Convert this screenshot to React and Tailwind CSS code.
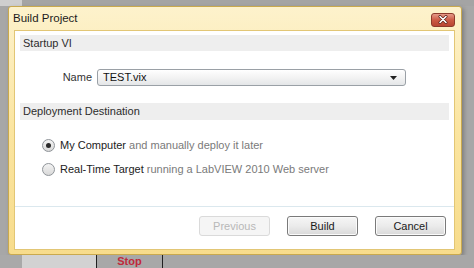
import React from "react";

const font = { fontFamily: '"Liberation Sans", Arial, sans-serif' };

function Radio({ checked }) {
  return (
    <div className="w-[13px] h-[13px] rounded-full border border-[#8f9499] bg-gradient-to-b from-[#f4f4f4] to-[#d8d8d8] flex items-center justify-center shrink-0">
      {checked && <div className="w-[5px] h-[5px] rounded-full bg-[#2a2a2a]" />}
    </div>
  );
}

function Btn({ children, disabled }) {
  return (
    <div
      className={
        "w-[71px] h-[20px] rounded-[3px] flex items-center justify-center text-[11px] " +
        (disabled
          ? "border border-[#dadada] bg-[#f5f5f5] text-[#b8b8b8]"
          : "border border-[#7a7a7a] bg-gradient-to-b from-[#f6f6f6] via-[#ebebeb] to-[#d9d9d9] text-[#1a1a1a] shadow-[inset_0_0_0_1px_#fbfbfb]")
      }
    >
      {children}
    </div>
  );
}

export default function App() {
  return (
    <div className="w-[474px] h-[268px] overflow-hidden bg-[#a7a7a7] flex flex-col" style={font}>
      <div className="h-[6px] flex">
        <div className="w-[22px] bg-[#cfcfcf]" />
        <div className="flex-1 bg-[#a4a4a4]" />
      </div>
      <div className="flex pl-[8px]">
        <div className="w-[454px] h-[249px] rounded-[3px] border border-[#c9a94e] bg-gradient-to-b from-[#fdf2cc] via-[#fbe5a0] to-[#f7dc8c] flex flex-col shadow-[2px_2px_4px_rgba(0,0,0,0.25)]">
          <div className="h-[23px] flex items-center justify-between pl-[4px] pr-[6px]">
            <span className="text-[11.5px] text-[#1c1c1c]">Build Project</span>
            <div className="w-[24px] h-[14px] mt-[2px] rounded-[3px] border border-[#8d3b2c] bg-gradient-to-b from-[#e59a88] via-[#cc5a45] to-[#b84533] flex items-center justify-center">
              <svg width="10" height="9" viewBox="0 0 10 9">
                <path d="M2 1.5 L8 7.5 M8 1.5 L2 7.5" stroke="#5a2018" strokeWidth="3" strokeLinecap="round" />
                <path d="M2 1.5 L8 7.5 M8 1.5 L2 7.5" stroke="#ffffff" strokeWidth="1.6" strokeLinecap="round" />
              </svg>
            </div>
          </div>
          <div className="ml-[5px] mr-[6px] h-[220px] bg-white border border-[#e2c675] flex flex-col">
            <div className="mt-[4px] mx-[5px] h-[16px] bg-[#eeeeee] flex items-center pl-[3px] text-[11px] text-[#2c2c2c]">
              Startup VI
            </div>
            <div className="mt-[18px] flex items-center h-[17px]">
              <span className="w-[77px] text-right text-[11px] text-[#333]">Name</span>
              <div className="ml-[5px] w-[309px] h-[17px] rounded-[3px] border border-[#9aa0a6] bg-gradient-to-b from-[#ffffff] via-[#f3f3f3] to-[#e4e6e8] flex items-center justify-between pl-[5px] pr-[8px]">
                <span className="text-[11px] text-[#111]">TEST.vix</span>
                <svg width="7" height="4" viewBox="0 0 7 4">
                  <path d="M0 0 H7 L3.5 4 Z" fill="#222" />
                </svg>
              </div>
            </div>
            <div className="mt-[17px] mx-[5px] h-[17px] bg-[#eeeeee] flex items-center pl-[3px] text-[11px] text-[#2c2c2c]">
              Deployment Destination
            </div>
            <div className="mt-[18px] ml-[27px] flex items-center gap-[5px] h-[14px]">
              <Radio checked />
              <span className="text-[11px] text-[#222]">
                My Computer <span className="text-[#7a7a7a]">and manually deploy it later</span>
              </span>
            </div>
            <div className="mt-[10px] ml-[27px] flex items-center gap-[5px] h-[14px]">
              <Radio />
              <span className="text-[11px] text-[#222]">
                Real-Time Target <span className="text-[#7a7a7a]">running a LabVIEW 2010 Web server</span>
              </span>
            </div>
            <div className="mt-[30px] h-[1px] bg-[#dbe8ee]" />
            <div className="mt-[9px] flex justify-end gap-[17px] pr-[8px]">
              <Btn disabled>Previous</Btn>
              <Btn>Build</Btn>
              <Btn>Cancel</Btn>
            </div>
          </div>
        </div>
      </div>
      <div className="flex-1 flex">
        <div className="w-[22px] bg-[#a9a9a9]" />
        <div className="w-[74px] bg-[#d2d2d2]" />
        <div className="w-[67px] bg-[#a8a8a8] border-x border-[#202020] flex justify-center">
          <span className="text-[11px] font-bold text-[#c0283a] leading-[12px]">Stop</span>
        </div>
        <div className="flex-1 bg-[#a7a7a7]" />
      </div>
    </div>
  );
}
